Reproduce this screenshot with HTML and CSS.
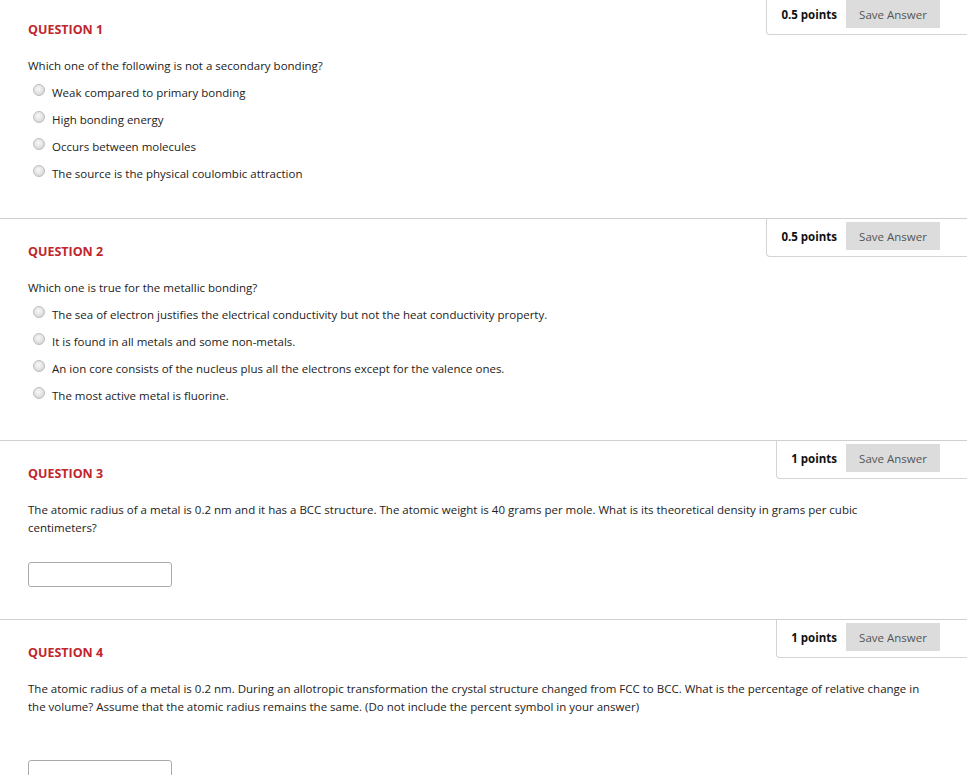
FILE: index.html
```html
<!DOCTYPE html>
<html>
<head>
<meta charset="utf-8">
<link rel="stylesheet" href="styles.css">
</head>
<body>
<div class="quiz">
  <section class="q q-first">
    <div class="q-head">
      <h3 class="q-title">QUESTION 1</h3>
      <div class="points"><span class="pts">0.5 points</span><button class="save">Save Answer</button></div>
    </div>
    <p class="q-text">Which one of the following is not a secondary bonding?</p>
    <ul class="opts">
      <li><span class="radio"></span>Weak compared to primary bonding</li>
      <li><span class="radio"></span>High bonding energy</li>
      <li><span class="radio"></span>Occurs between molecules</li>
      <li><span class="radio"></span>The source is the physical coulombic attraction</li>
    </ul>
  </section>
  <section class="q">
    <div class="q-head">
      <h3 class="q-title">QUESTION 2</h3>
      <div class="points"><span class="pts">0.5 points</span><button class="save">Save Answer</button></div>
    </div>
    <p class="q-text">Which one is true for the metallic bonding?</p>
    <ul class="opts">
      <li><span class="radio"></span>The sea of electron justifies the electrical conductivity but not the heat conductivity property.</li>
      <li><span class="radio"></span>It is found in all metals and some non-metals.</li>
      <li><span class="radio"></span>An ion core consists of the nucleus plus all the electrons except for the valence ones.</li>
      <li><span class="radio"></span>The most active metal is fluorine.</li>
    </ul>
  </section>
  <section class="q q-input">
    <div class="q-head">
      <h3 class="q-title">QUESTION 3</h3>
      <div class="points"><span class="pts">1 points</span><button class="save">Save Answer</button></div>
    </div>
    <p class="q-text">The atomic radius of a metal is 0.2 nm and it has a BCC structure. The atomic weight is 40 grams per mole. What is its theoretical density in grams per cubic centimeters?</p>
    <input class="answer" type="text">
  </section>
  <section class="q q-input q-last">
    <div class="q-head">
      <h3 class="q-title">QUESTION 4</h3>
      <div class="points"><span class="pts">1 points</span><button class="save">Save Answer</button></div>
    </div>
    <p class="q-text">The atomic radius of a metal is 0.2 nm. During an allotropic transformation the crystal structure changed from FCC to BCC. What is the percentage of relative change in the volume? Assume that the atomic radius remains the same. (Do not include the percent symbol in your answer)</p>
    <input class="answer answer-low" type="text">
  </section>
</div>
</body>
</html>
```

FILE: styles.css
```css
html, body {
  margin: 0;
  padding: 0;
  background: #fff;
  overflow: hidden;
}
body {
  font-family: "Open Sans", "DejaVu Sans", sans-serif;
  font-size: 11.5px;
  color: #222;
}
.quiz {
  width: 967px;
  margin-top: -4px;
}
.q {
  border-top: 1px solid #cfcfcf;
  padding-bottom: 35px;
}
.q-head {
  display: flex;
  justify-content: space-between;
  align-items: flex-start;
  height: 40px;
}
.q-title {
  margin: 25px 0 0 28px;
  font-size: 12.5px;
  line-height: 16px;
  font-weight: 700;
  color: #c0262d;
}
.points {
  display: flex;
  align-items: center;
  gap: 9px;
  padding: 3px 27px 6px 14px;
  border-left: 1px solid #d4d4d4;
  border-bottom: 1px solid #d4d4d4;
  border-bottom-left-radius: 4px;
}
.pts {
  font-weight: 700;
  font-size: 11.5px;
  color: #111;
}
.save {
  width: 94px;
  height: 28px;
  border: 0;
  background: #dcdcdc;
  color: #555;
  font-family: "Open Sans", "DejaVu Sans", sans-serif;
  font-size: 11.5px;
  padding: 0;
}
.q-text {
  margin: 20px 0 0 28px;
  max-width: 897px;
  line-height: 18px;
}
.opts {
  list-style: none;
  margin: 0;
  padding: 0;
}
.opts li {
  display: flex;
  align-items: flex-start;
  gap: 7px;
  margin: 9px 0 0 33px;
  line-height: 18px;
}
.radio {
  flex: none;
  width: 10px;
  height: 10px;
  margin-top: 0;
  border: 1px solid #bdbdbd;
  border-radius: 50%;
  background: radial-gradient(circle at 45% 40%, #f8f8f8 0%, #e6e6e6 45%, #cbcbcb 100%);
}
.q-input {
  padding-bottom: 32px;
}
.answer {
  display: block;
  margin: 25px 0 0 28px;
  width: 144px;
  height: 25px;
  box-sizing: border-box;
  border: 1px solid #aaa;
  border-radius: 3px;
  background: #fff;
  padding: 0;
}
.answer-low {
  margin-top: 44px;
}
```
